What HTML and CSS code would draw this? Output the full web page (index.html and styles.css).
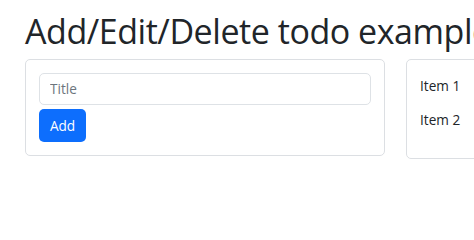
FILE: index.html
```html
<!DOCTYPE html>
<html lang="en">
<head>
<meta charset="utf-8">
<title>Todo</title>
<link rel="stylesheet" href="styles.css">
</head>
<body>
<div class="container">
  <h1 class="title">Add/Edit/Delete todo example</h1>
  <div class="row">
    <div class="card form-card">
      <input class="field" type="text" placeholder="Title">
      <button class="btn" type="button">Add</button>
    </div>
    <div class="card list-card">
      <p class="item">Item 1</p>
      <p class="item">Item 2</p>
    </div>
  </div>
</div>
</body>
</html>
```
FILE: styles.css
```css
html, body {
  margin: 0;
  padding: 0;
  overflow: hidden;
  background: #fff;
}
body {
  font-family: "Open Sans", "Noto Sans", sans-serif;
  color: #212529;
  font-size: 13.6px;
  line-height: 1.5;
}
.container {
  padding: 11px 0 0 25px;
}
.title {
  margin: 0 0 7px 0;
  font-size: 34px;
  font-weight: 400;
  line-height: 1.2;
  letter-spacing: -0.45px;
  white-space: nowrap;
}
.row {
  display: flex;
  gap: 21px;
  align-items: flex-start;
}
.card {
  flex: 0 0 auto;
  border: 1px solid #dcdfe3;
  border-radius: 5px;
  background: #fff;
}
.form-card {
  width: 332px;
  padding: 13px;
  display: flex;
  flex-direction: column;
  align-items: flex-start;
  gap: 4px;
}
.field {
  box-sizing: border-box;
  width: 332px;
  height: 32px;
  margin: 0;
  padding: 0 10px;
  border: 1px solid #dee2e6;
  border-radius: 5px;
  font-family: inherit;
  font-size: 13.6px;
  color: #212529;
  outline: none;
}
.field::placeholder {
  color: #6c757d;
}
.btn {
  box-sizing: border-box;
  width: 47px;
  height: 33px;
  margin: 0;
  padding: 0;
  border: 0;
  border-radius: 5px;
  background: #0d6efd;
  color: #fff;
  font-family: inherit;
  font-size: 13.6px;
}
.list-card {
  width: 334px;
  padding: 16px 13px 13px 13px;
}
.item {
  margin: 0 0 14px 0;
  line-height: 20.4px;
}
```
